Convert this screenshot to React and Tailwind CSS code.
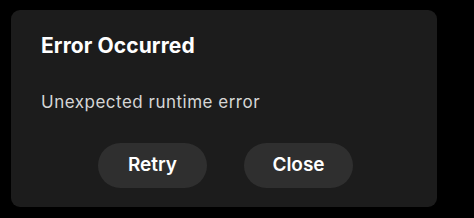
export default function App() {
  return (
    <div className="w-[474px] h-[218px] bg-black pt-[10px] pl-[11px]" style={{ fontFamily: 'Inter, "Noto Sans", sans-serif' }}>
      <div className="w-[426px] h-[197px] rounded-[9px] bg-[#1c1c1c] pl-[30px] pt-[22px] flex flex-col">
        <div className="text-[21px] leading-[28px] font-bold text-white tracking-[0.1px]">Error Occurred</div>
        <div className="mt-[30px] text-[17px] leading-[24px] text-[#d6d6d6] tracking-[0.5px]">Unexpected runtime error</div>
        <div className="mt-[29px] flex gap-[37px] pl-[57px]">
          <button className="w-[109px] h-[45px] rounded-full bg-[#2f2f2f] text-white text-[19px] font-semibold">Retry</button>
          <button className="w-[109px] h-[45px] rounded-full bg-[#2f2f2f] text-white text-[19px] font-semibold">Close</button>
        </div>
      </div>
    </div>
  );
}
